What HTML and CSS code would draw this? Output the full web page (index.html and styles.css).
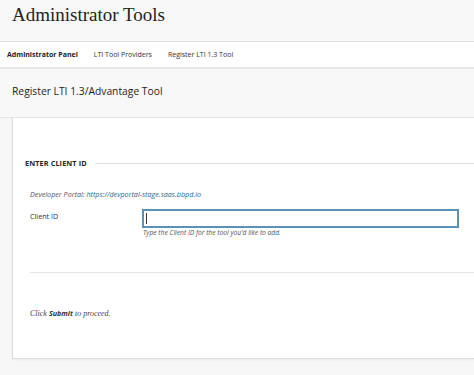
FILE: index.html
```html
<!DOCTYPE html>
<html lang="en">
<head>
<meta charset="utf-8">
<title>Administrator Tools</title>
<link rel="stylesheet" href="styles.css">
</head>
<body>
<header class="title-bar">
  <h1 class="title">Administrator Tools</h1>
</header>
<nav class="tabs">
  <span class="tab tab-active">Administrator Panel</span>
  <span class="tab">LTI Tool Providers</span>
  <span class="tab">Register LTI 1.3 Tool</span>
</nav>
<div class="page-head">
  <h2 class="page-title">Register LTI 1.3/Advantage Tool</h2>
</div>
<main class="content">
  <section class="card">
    <div class="legend-row">
      <span class="legend">ENTER CLIENT ID</span>
      <span class="legend-line"></span>
    </div>
    <p class="portal">Developer Portal: <a class="portal-link" href="#">https://devportal-stage.saas.bbpd.io</a></p>
    <div class="field-row">
      <label class="field-label" for="client">Client ID</label>
      <div class="field-col">
        <div class="input-box"><span class="caret"></span></div>
        <p class="help">Type the Client ID for the tool you'd like to add.</p>
      </div>
    </div>
    <hr class="sep">
    <p class="submit-note">Click <b class="submit-word">Submit</b> to proceed.</p>
  </section>
</main>
</body>
</html>
```
FILE: styles.css
```css
html, body {
  margin: 0;
  padding: 0;
}
body {
  width: 474px;
  height: 375px;
  overflow: hidden;
  background: #f7f7f7;
  font-family: "Open Sans", "Noto Sans", sans-serif;
  color: #262626;
}
.title-bar {
  height: 42px;
  background: #f8f8f8;
  border-bottom: 1px solid #e1e1e1;
  box-sizing: border-box;
  padding: 5px 0 0 12px;
}
.title {
  margin: 0;
  font-family: "Liberation Serif", serif;
  font-weight: normal;
  font-size: 19px;
  line-height: 19px;
  color: #222;
}
.tabs {
  height: 27px;
  background: #fff;
  border-bottom: 2px solid #e6e6e6;
  box-sizing: border-box;
  display: flex;
  align-items: center;
  padding-left: 7px;
  gap: 16px;
}
.tab {
  font-size: 7px;
  color: #333;
  line-height: 10px;
}
.tab-active {
  font-weight: bold;
  color: #222;
}
.page-head {
  height: 49px;
  background: #f8f8f8;
  border-bottom: 1px solid #e4e4e4;
  box-sizing: border-box;
  display: flex;
  align-items: center;
  padding: 0 0 5px 12px;
}
.page-title {
  margin: 0;
  font-weight: normal;
  font-size: 10.3px;
  line-height: 14px;
  color: #1e1e1e;
}
.content {
  padding-left: 12px;
  padding-bottom: 16px;
}
.card {
  height: 241px;
  box-sizing: border-box;
  background: #fff;
  border: 1px solid #dcdcdc;
  border-top: 0;
  border-right: 0;
  box-shadow: 0 1px 2px rgba(0,0,0,0.06);
  padding: 39px 0 0 12px;
}
.legend-row {
  display: flex;
  align-items: center;
  height: 12px;
}
.legend {
  font-size: 7.3px;
  font-weight: bold;
  color: #262626;
  letter-spacing: 0.1px;
}
.legend-line {
  flex: 1;
  height: 1px;
  background: #dedede;
  margin-left: 8px;
}
.portal {
  margin: 20px 0 0 5px;
  font-size: 7.2px;
  line-height: 10px;
  font-style: italic;
  color: #555;
}
.portal-link {
  color: #2a6b86;
  text-decoration: none;
}
.field-row {
  display: flex;
  margin: 10px 0 0 5px;
}
.field-label {
  width: 112px;
  font-size: 7.2px;
  line-height: 14px;
  color: #333;
}
.field-col {
  display: flex;
  flex-direction: column;
}
.input-box {
  width: 317px;
  height: 19px;
  box-sizing: border-box;
  border: 2px solid #5c91b6;
  background: #fff;
  display: flex;
  align-items: center;
  padding-left: 2px;
}
.caret {
  width: 1px;
  height: 11px;
  background: #333;
}
.help {
  margin: 1px 0 0 1px;
  font-size: 6.7px;
  line-height: 8px;
  font-style: italic;
  color: #555;
}
.sep {
  margin: 35px 0 0 5px;
  border: 0;
  height: 1px;
  background: #e6e6e6;
}
.submit-note {
  margin: 34px 0 0 5px;
  font-family: "Liberation Serif", serif;
  font-style: italic;
  font-size: 8px;
  line-height: 12px;
  color: #444;
}
.submit-word {
  font-family: "Open Sans", sans-serif;
  font-style: italic;
  font-size: 7.2px;
  color: #333;
}
```
